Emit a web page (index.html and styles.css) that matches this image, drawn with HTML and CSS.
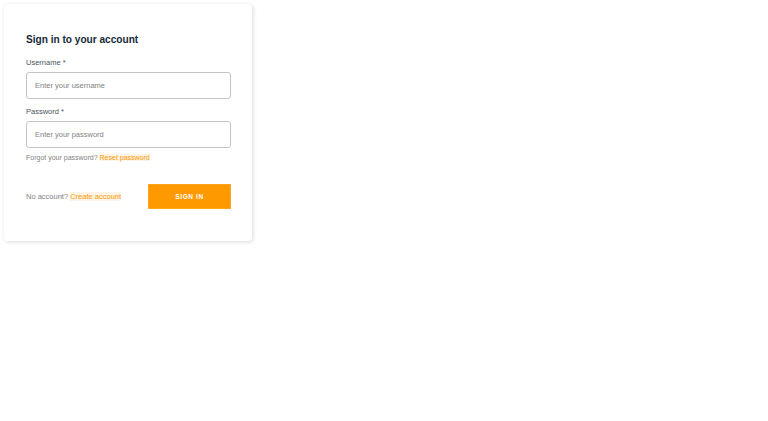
FILE: index.html
```html
<!DOCTYPE html>
<html>
<head>
<meta charset="utf-8">
<link rel="stylesheet" href="styles.css">
</head>
<body>
<div class="card">
  <div class="title">Sign in to your account</div>
  <div class="field">
    <label class="label">Username <span>*</span></label>
    <input class="input" type="text" placeholder="Enter your username">
  </div>
  <div class="field">
    <label class="label">Password <span>*</span></label>
    <input class="input" type="password" placeholder="Enter your password">
    <div class="hint">Forgot your password? <a class="link">Reset password</a></div>
  </div>
  <div class="footer">
    <div class="secondary">No account? <a class="link">Create account</a></div>
    <button class="button">SIGN IN</button>
  </div>
</div>
</body>
</html>
```
FILE: styles.css
```css
* { box-sizing: border-box; }
body {
  margin: 0;
  padding: 4px;
  background: #fff;
  font-family: "Liberation Sans", Arial, sans-serif;
  color: #152939;
}
.card {
  width: 248px;
  height: 237px;
  background: #fff;
  border-radius: 4px;
  box-shadow: 1px 1px 4px 0 rgba(0,0,0,0.15);
  padding: 29px 21px 0 22px;
}
.title {
  font-size: 10.1px;
  font-weight: bold;
  color: #152939;
  line-height: 14px;
  margin-bottom: 11px;
}
.field { margin-bottom: 8px; }
.label {
  display: block;
  font-size: 7.5px;
  color: #4a5560;
  line-height: 10px;
  margin-bottom: 4px;
}
.input {
  display: block;
  width: 100%;
  height: 27px;
  border: 1px solid #c4c4c4;
  border-radius: 3px;
  padding: 0 8px;
  font-family: inherit;
  font-size: 7.5px;
  color: #152939;
  background: #fff;
  outline: none;
}
.input::placeholder { color: #828282; }
.hint {
  font-size: 7px;
  color: #828282;
  margin-top: 5px;
  line-height: 9px;
}
.link {
  color: #ff9900;
  background: #fdf3e6;
  cursor: pointer;
}
.footer {
  display: flex;
  align-items: center;
  justify-content: space-between;
  margin-top: 22px;
}
.secondary {
  font-size: 7.5px;
  color: #828282;
}
.button {
  width: 83px;
  height: 25px;
  background: #ff9900;
  border: 1px solid #ffa51f;
  color: #fff;
  font-family: inherit;
  font-size: 6.5px;
  letter-spacing: 0.6px;
  font-weight: bold;
  padding: 0;
  cursor: pointer;
}
```
